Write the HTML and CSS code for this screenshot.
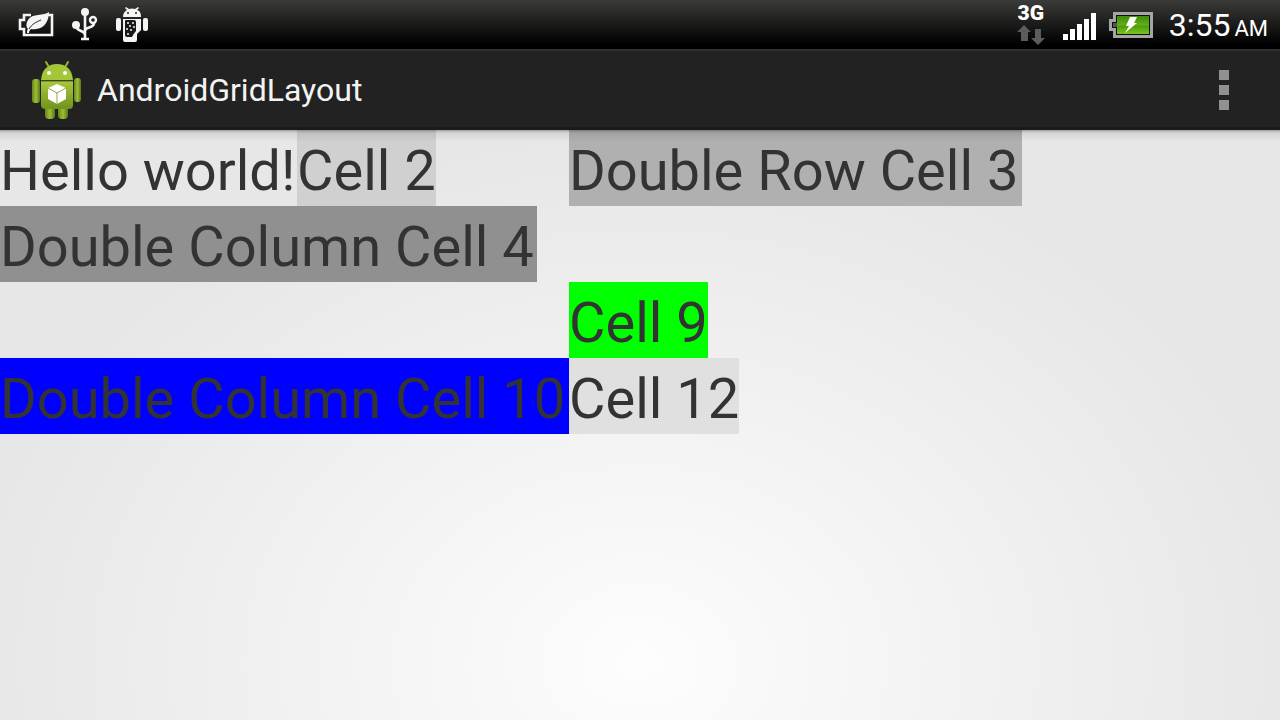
FILE: index.html
```
<!DOCTYPE html>
<html lang="en">
<head>
    <meta charset="UTF-8">
    <meta name="viewport" content="width=device-width, initial-scale=1.0">
    <title>AndroidGridLayout</title>
    <link rel="stylesheet" href="styles.css">
</head>
<body>
    <div class="status-bar">
        <div class="notifications">
            <svg width="36" height="26" viewBox="0 0 36 26" aria-label="Power saver">
                <path d="M13 3H6v5H2v9h4v6h28V3h-4" fill="none" stroke="#f4f4f4" stroke-width="2.6"/>
                <path d="M31 0C26 4 14 1 10 8c-3 5-1 8 0 9-1 1-1 2-1 4h2c0-2 1-3 2-4 13 2 18-8 18-17z" fill="#f4f4f4"/>
                <path d="M11 17c3-5 7-7 12-9" fill="none" stroke="#222" stroke-width="1"/>
            </svg>
            <svg width="26" height="34" viewBox="0 0 26 34" aria-label="USB connected">
                <circle cx="13" cy="4" r="4" fill="#f4f4f4"/>
                <circle cx="4" cy="17" r="4" fill="#f4f4f4"/>
                <circle cx="21" cy="12" r="3" fill="none" stroke="#f4f4f4" stroke-width="2.4"/>
                <path d="M13 4v27M4 18c1 6 9 4 9 9M22 15c0 6-9 3-9 8M9 31h8" fill="none" stroke="#f4f4f4" stroke-width="2.6"/>
            </svg>
            <svg width="32" height="36" viewBox="0 0 32 36" aria-label="USB debugging">
                <path d="M7 10c0-4 2-6 4-7L9 1l1-1 3 2q3-1 6 0l3-2 1 1-2 2c3 1 4 3 4 7z" fill="#f4f4f4"/>
                <circle cx="12" cy="6" r="1" fill="#222"/>
                <circle cx="20" cy="6" r="1" fill="#222"/>
                <rect x="0" y="11" width="5" height="13" rx="2" fill="#f4f4f4"/>
                <rect x="27" y="11" width="5" height="13" rx="2" fill="#f4f4f4"/>
                <path d="M7 12h18v11l-4 4v6q0 2-2 2H9q-2 0-2-2z" fill="#f4f4f4"/>
                <path d="M9 14q0-1 1-1h8q2 0 2 2v9q-2 2-4 6H11q-2 0-2-2z" fill="#181818"/>
                <g fill="#f4f4f4">
                    <circle cx="12" cy="16" r="1"/><circle cx="17" cy="16" r="1"/>
                    <circle cx="14" cy="19" r="1"/><circle cx="18" cy="20" r="1"/>
                    <circle cx="11" cy="22" r="1"/><circle cx="15" cy="23" r="1"/>
                    <circle cx="12" cy="27" r="1"/>
                </g>
            </svg>
        </div>
        <div class="system">
            <div class="network">
                <span class="network-type">3G</span>
                <svg width="28" height="20" viewBox="0 0 28 20" aria-hidden="true">
                    <path d="M7 0l7 7h-3v9H4V7H0zM18 4h6v9h4l-7 7-7-7h4z" fill="#5c5c5c"/>
                </svg>
            </div>
            <svg width="34" height="30" viewBox="0 0 34 30" aria-label="Signal">
                <path d="M0 24h5v6H0zM7 19h5v11H7zM14 14h5v16h-5zM21 9h5v21h-5zM28 3h5v27h-5z" fill="#fff"/>
            </svg>
            <svg width="44" height="26" viewBox="0 0 44 26" aria-label="Battery charging">
                <defs>
                    <linearGradient id="charge" x2="0" y2="1">
                        <stop offset="0" stop-color="#3d8c08"/>
                        <stop offset="0.5" stop-color="#64ae1c"/>
                        <stop offset="0.55" stop-color="#4c9c08"/>
                        <stop offset="1" stop-color="#7cc41e"/>
                    </linearGradient>
                </defs>
                <path d="M4 0h40v26H4v-7H0V7h4z" fill="#a5a5a5"/>
                <path d="M7 3h34v20H7v-7H3v-6h4z" fill="#111"/>
                <path d="M4 11h4v4H4z" fill="#555"/>
                <path d="M8 4h32v18H8z" fill="url(#charge)"/>
                <path d="M21 5h7l-3 6h3L16 21l4-7h-3z" fill="#fff"/>
            </svg>
            <time class="clock" datetime="03:55"><span>3:55</span><small>AM</small></time>
        </div>
    </div>

    <header class="action-bar">
        <svg width="50" height="60" viewBox="0 0 50 60" aria-hidden="true">
            <defs>
                <linearGradient id="droid" x2="0" y2="1">
                    <stop offset="0" stop-color="#a9c83c"/>
                    <stop offset="1" stop-color="#70931c"/>
                </linearGradient>
                <linearGradient id="limb">
                    <stop offset="0" stop-color="#67851a"/>
                    <stop offset="0.5" stop-color="#9cbf36"/>
                    <stop offset="1" stop-color="#5a7716"/>
                </linearGradient>
            </defs>
            <path d="M14 2l4 7M36 2l-4 7" stroke="#94b52f" stroke-width="2" stroke-linecap="round"/>
            <rect x="13" y="42" width="10" height="17" rx="4" fill="url(#limb)"/>
            <rect x="26" y="42" width="10" height="17" rx="4" fill="url(#limb)"/>
            <rect x="0" y="19" width="8" height="24" rx="3" fill="url(#limb)"/>
            <rect x="42" y="18" width="7" height="24" rx="3" fill="url(#limb)"/>
            <path d="M9 20C10 9 16 4 25 4s15 5 16 16z" fill="#a4c639"/>
            <path d="M9 21h32v24q0 4-4 4H13q-4 0-4-4z" fill="url(#droid)"/>
            <path d="M9 21h32" stroke="#526d16" stroke-width="1"/>
            <circle cx="17" cy="13" r="2" fill="#fff"/>
            <circle cx="33" cy="13" r="2" fill="#fff"/>
            <path d="M25 24l9 4v11l-9 5-9-5V28z" fill="#fff"/>
            <path d="M16 28l9 5 9-5M25 33v11" fill="none" stroke="#8faa3a" stroke-width="1"/>
        </svg>
        <h1>AndroidGridLayout</h1>
        <button class="overflow" type="button" aria-label="More options">
            <span></span>
            <span></span>
            <span></span>
        </button>
    </header>

    <main class="grid">
        <div class="cell">Hello world!</div>
        <div class="cell cell-2">Cell 2</div>
        <div class="cell cell-3">Double Row Cell 3</div>
        <div class="cell cell-4">Double Column Cell 4</div>
        <div class="cell cell-9">Cell 9</div>
        <div class="cell cell-10">Double Column Cell 10</div>
        <div class="cell cell-12">Cell 12</div>
    </main>
</body>
</html>
```
FILE: styles.css
```
* {
    box-sizing: border-box;
}

body {
    margin: 0;
    min-height: 100vh;
    display: flex;
    flex-direction: column;
    font-family: Roboto, sans-serif;
    color: #333;
}

svg {
    display: block;
    flex: none;
}

.status-bar {
    display: flex;
    justify-content: space-between;
    height: 49px;
    padding: 0 12px 0 18px;
    background: linear-gradient(#3b3b39, #000 90%);
    color: #fff;
}

.notifications,
.system {
    display: flex;
    align-items: center;
}

.notifications {
    gap: 18px;
}

.system {
    gap: 12px;
}

.network {
    display: flex;
    flex-direction: column;
    align-items: center;
    gap: 4px;
    margin-right: 6px;
}

.network-type {
    font-size: 21px;
    font-weight: 900;
    line-height: 16px;
}

.clock {
    display: flex;
    align-items: baseline;
    gap: 4px;
    margin-left: 4px;
    font-size: 32px;
}

.clock small {
    font-size: 22px;
}

.action-bar {
    display: flex;
    align-items: center;
    height: 81px;
    padding: 2px 32px 0;
    background: #222;
    border-top: 2px solid #303030;
    border-bottom: 3px solid #1a1a1a;
    color: #f3f3f3;
}

.action-bar h1 {
    margin: 0 0 0 15px;
    font-size: 32px;
    font-weight: 400;
}

.overflow {
    display: flex;
    flex-direction: column;
    gap: 5px;
    margin-left: auto;
    padding: 0 19px;
    border: 0;
    background: none;
    cursor: pointer;
}

.overflow span {
    width: 10px;
    height: 10px;
    background: #919191;
}

.grid {
    position: relative;
    flex: 1;
    display: grid;
    grid-template-columns: 297px 272px auto;
    grid-auto-rows: 76px;
    justify-content: start;
    justify-items: start;
    background: radial-gradient(ellipse 660px 520px at 50% 90%, #fdfdfd, #e7e7e7);
}

/* shadow of the action bar */
.grid::before {
    content: "";
    position: absolute;
    top: 0;
    left: 0;
    right: 0;
    height: 12px;
    background: linear-gradient(rgba(0, 0, 0, 0.3), rgba(0, 0, 0, 0.08) 25%, transparent);
    z-index: 1;
}

.cell {
    font-size: 56px;
    line-height: 82px;
    height: 76px;
    white-space: nowrap;
}

.cell-2 {
    background: #d0d0d0;
}

.cell-3 {
    background: #b0b0b0;
}

.cell-4 {
    grid-column: 1 / span 2;
    padding-right: 3px;
    background: #909090;
}

.cell-3 {
    padding-right: 4px;
}

.cell-9 {
    grid-area: 3 / 3;
    background: #0f0;
}

.cell-10 {
    grid-area: 4 / 1 / auto / span 2;
    justify-self: stretch;
    background: #00f;
}

.cell-12 {
    grid-area: 4 / 3;
    background: #e0e0e0;
}
```
